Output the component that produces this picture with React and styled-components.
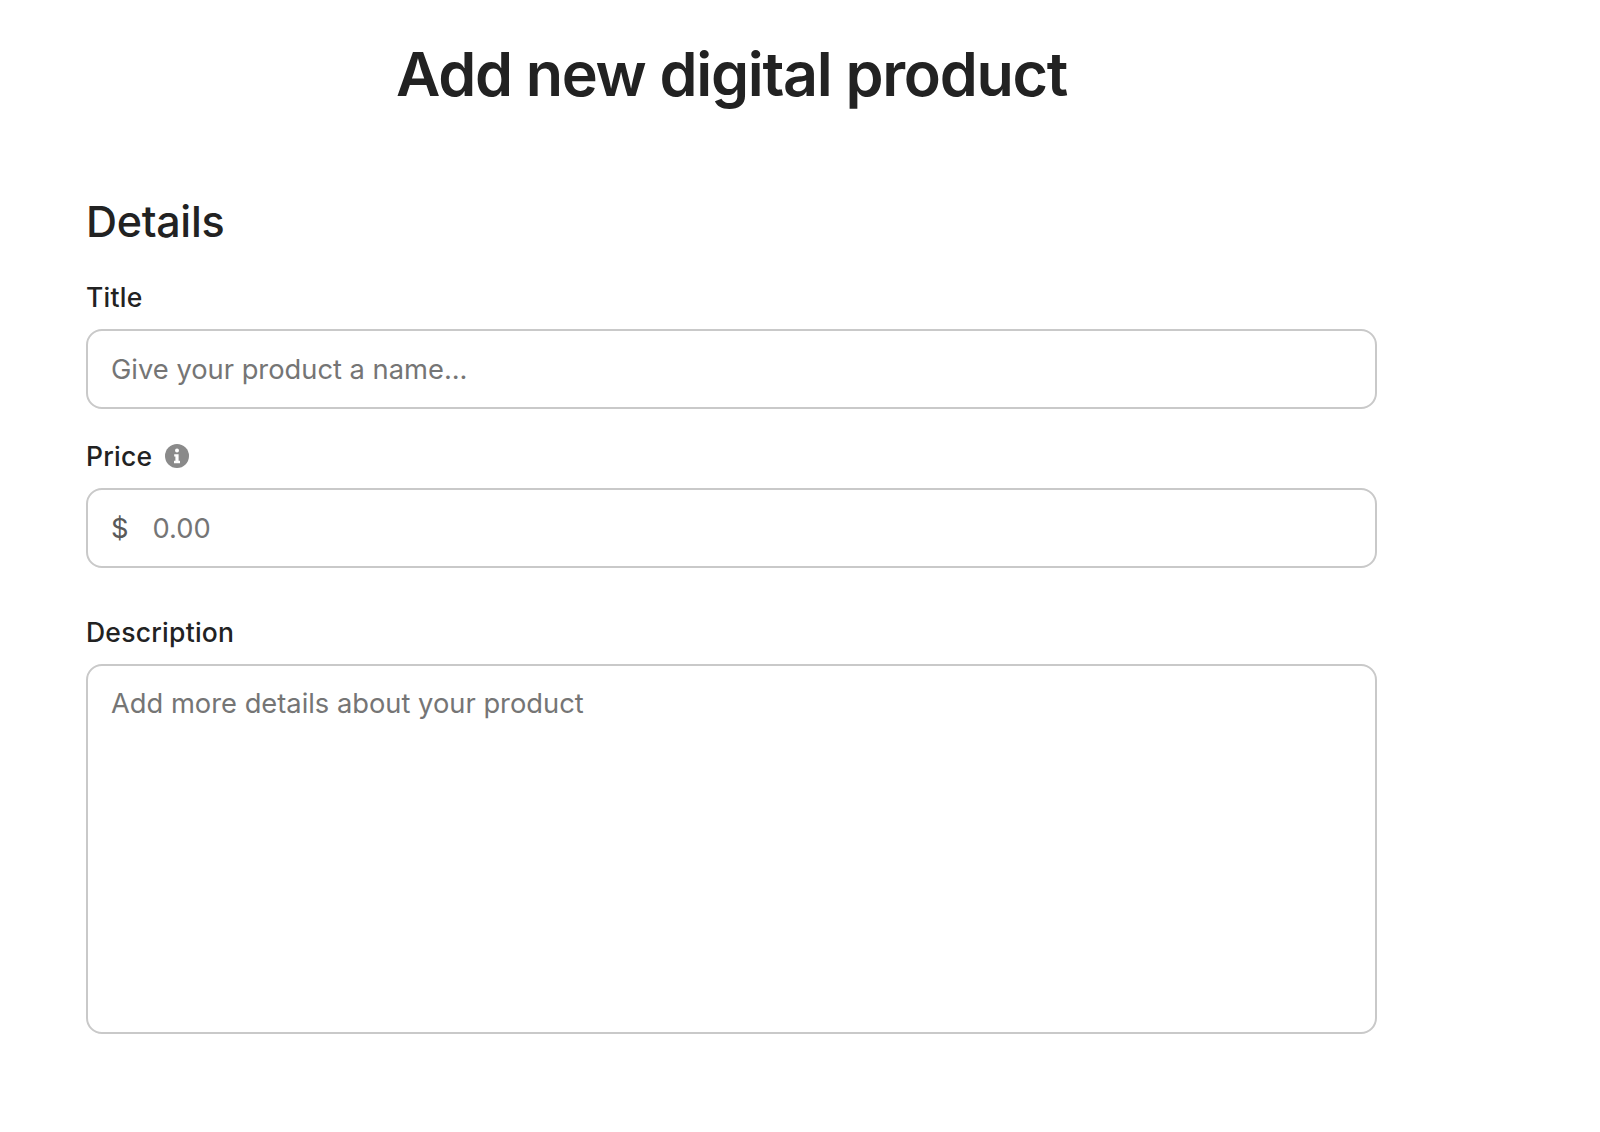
import styled, {createGlobalStyle} from 'styled-components';

const GlobalStyle = createGlobalStyle`
  html, body {
    margin: 0;
    background: #fff;
    color: #222;
    font-family: "Inter", "Liberation Sans", sans-serif;
  }
`;

const Page = styled.main`
  box-sizing: border-box;
  display: flex;
  flex-direction: column;
  height: 1132px;
  padding: 31px 0 0 86px;
  width: 1377px;
`;

const PageTitle = styled.h1`
  color: #222;
  font-size: 61px;
  font-weight: 600;
  letter-spacing: -1.3px;
  line-height: 86px;
  margin: 0 0 79px;
  text-align: center;
`;

const SectionTitle = styled.h2`
  color: #222;
  font-size: 43px;
  font-weight: 500;
  letter-spacing: -0.3px;
  line-height: 50px;
  margin: 0 0 33px;
`;

const Field = styled.div`
  display: flex;
  flex-direction: column;
  margin-bottom: ${({$gap}) => $gap || 29}px;
`;

const Label = styled.label`
  align-items: center;
  color: #222;
  display: flex;
  font-size: 26.5px;
  font-weight: 500;
  gap: 13px;
  height: 36px;
  letter-spacing: 0.25px;
  margin-bottom: 14px;
`;

const InputBox = styled.div`
  align-items: center;
  border: 2px solid #c9c9c9;
  border-radius: 16px;
  box-sizing: border-box;
  display: flex;
  gap: 24px;
  height: 80px;
  padding: 0 23px;
`;

const Input = styled.input`
  background: none;
  border: 0;
  color: #222;
  flex: 1;
  font-family: inherit;
  font-size: 27.3px;
  outline: none;
  padding: 0;
  &::placeholder {
    color: #757575;
    opacity: 1;
  }
`;

const Prefix = styled.span`
  color: #595959;
  font-size: 27.3px;
`;

const TextArea = styled.textarea`
  background: none;
  border: 2px solid #c9c9c9;
  border-radius: 16px;
  box-sizing: border-box;
  color: #222;
  font-family: inherit;
  font-size: 27.3px;
  height: 370px;
  line-height: 36px;
  outline: none;
  padding: 20px 23px;
  resize: none;
  &::placeholder {
    color: #757575;
    opacity: 1;
  }
`;

const InfoIcon = () => (
  <svg width="24" height="24" viewBox="0 0 24 24" aria-hidden="true">
    <circle cx="12" cy="12" r="12" fill="#8a8a8a" />
    <circle cx="12" cy="6.6" r="2" fill="#fff" />
    <path d="M9.2 10.2h4.4v6.6h1.4v2.4H9v-2.4h1.4v-4.2H9.2z" fill="#fff" />
  </svg>
);

const App = () => {
  return (
    <Page>
      <GlobalStyle />
      <PageTitle>Add new digital product</PageTitle>
      <SectionTitle>Details</SectionTitle>
      <Field>
        <Label htmlFor="title">Title</Label>
        <InputBox>
          <Input id="title" placeholder="Give your product a name..." />
        </InputBox>
      </Field>
      <Field $gap={46}>
        <Label htmlFor="price">Price <InfoIcon /></Label>
        <InputBox>
          <Prefix>$</Prefix>
          <Input id="price" placeholder="0.00" />
        </InputBox>
      </Field>
      <Field>
        <Label htmlFor="description">Description</Label>
        <TextArea id="description" placeholder="Add more details about your product" />
      </Field>
    </Page>
  );
};

export default App;
